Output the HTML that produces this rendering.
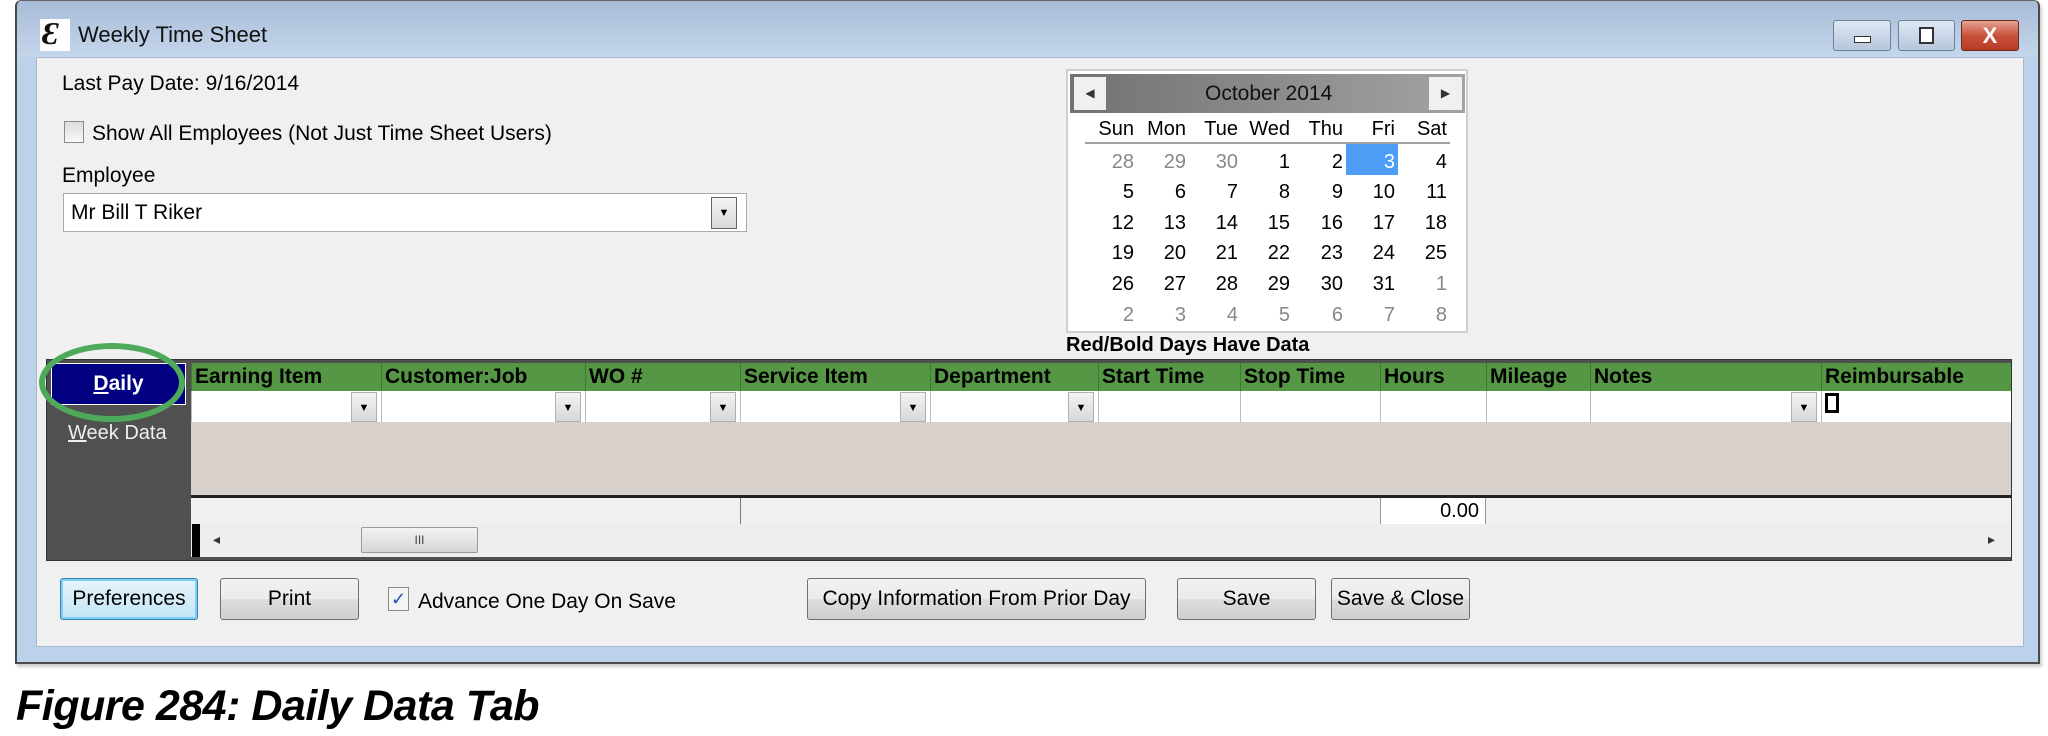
<!DOCTYPE html>
<html><head><meta charset="utf-8"><style>
*{box-sizing:border-box;margin:0;padding:0}
body{width:2048px;height:736px;background:#fff;position:relative;overflow:hidden;font-family:"Liberation Sans",sans-serif;font-size:21px;color:#000}
.a{position:absolute}
.t{position:absolute;white-space:nowrap;line-height:1}
.btn{position:absolute;border:1px solid #707070;border-radius:3px;background:linear-gradient(#f2f2f2,#ebebeb 50%,#dddddd 51%,#cfcfcf);text-align:center;font-size:21px;line-height:40px;white-space:nowrap}
.dd{position:absolute;width:26px;background:linear-gradient(#f4f4f4,#d8d8d8);border:1px solid #b0b0b0;font-size:11px;text-align:center}
.hd{position:absolute;top:363px;height:28px;font-weight:bold;font-size:21px;line-height:28px;padding-left:3px;border-left:1px solid #3f7a30;white-space:nowrap;overflow:hidden}
.cell{position:absolute;top:391px;height:31px;background:#fff;border-left:1px solid #bbb}
.n{position:absolute;width:40px;text-align:right;font-size:20px;line-height:1}
</style></head><body>
<div class="a" style="left:15px;top:0;width:2025px;height:664px;background:#bcd1ea;border:2px solid #4a4a4a;border-top:1px solid #666;border-radius:6px 6px 0 0;box-shadow:2px 3px 3px #ccc"></div>
<div class="a" style="left:17px;top:1px;width:2021px;height:56px;background:linear-gradient(#a8bcd7,#c4d6eb);border-radius:6px 6px 0 0"></div>
<div class="a" style="left:36px;top:57px;width:1988px;height:590px;background:#f0f0f0;border:1px solid #a5b8cf"></div>
<div class="a" style="left:40px;top:19px;width:30px;height:32px;background:#fff"></div>
<div class="t" style="left:42px;top:17px;font-family:'Liberation Serif',serif;font-style:italic;font-weight:bold;font-size:32px;color:#111">Ɛ</div>
<div class="t" style="left:78px;top:24px;font-size:22px;color:#111">Weekly Time Sheet</div>
<div class="a" style="left:1833px;top:20px;width:58px;height:31px;border:1px solid #6d7f99;border-radius:3px;background:linear-gradient(#dfe8f4,#b6c6dc)"><div class="a" style="left:20px;top:15px;width:17px;height:7px;border:1px solid #333;background:#fff"></div></div>
<div class="a" style="left:1898px;top:20px;width:57px;height:31px;border:1px solid #6d7f99;border-radius:3px;background:linear-gradient(#dfe8f4,#b6c6dc)"><div class="a" style="left:20px;top:6px;width:15px;height:17px;border:2px solid #333;background:#fff"></div></div>
<div class="a" style="left:1961px;top:20px;width:58px;height:31px;border:1px solid #6b2a20;border-radius:3px;background:linear-gradient(#e8a293,#c8523d 50%,#b93a24);color:#fff;font-weight:bold;font-size:22px;text-align:center;line-height:29px">X</div>
<div class="t" style="left:62px;top:73px">Last Pay Date: 9/16/2014</div>
<div class="a" style="left:64px;top:121px;width:20px;height:22px;border:1px solid #8a8a8a;background:linear-gradient(#ddd,#f8f8f8)"></div>
<div class="t" style="left:92px;top:123px">Show All Employees (Not Just Time Sheet Users)</div>
<div class="t" style="left:62px;top:165px">Employee</div>
<div class="a" style="left:63px;top:193px;width:684px;height:39px;background:#fff;border:1px solid #aaa"></div>
<div class="t" style="left:71px;top:202px">Mr Bill T Riker</div>
<div class="dd" style="left:711px;top:197px;height:32px;line-height:30px;border-color:#666">▼</div>
<div class="a" style="left:1066px;top:69px;width:402px;height:264px;background:#fff;border:2px solid #cfcfcf"></div>
<div class="a" style="left:1070px;top:74px;width:395px;height:39px;background:linear-gradient(90deg,#727272,#a3a3a3)"></div>
<div class="a" style="left:1074px;top:77px;width:32px;height:33px;background:#f0f0f0;font-size:12px;text-align:center;line-height:33px;color:#333">◀</div>
<div class="a" style="left:1429px;top:77px;width:33px;height:33px;background:#f0f0f0;font-size:12px;text-align:center;line-height:33px;color:#333">▶</div>
<div class="t" style="left:1205px;top:83px;font-size:21px;color:#111">October 2014</div>
<div class="a" style="left:1085px;top:142px;width:365px;height:2px;background:#a0a0a0"></div>
<div class="a" style="left:1346px;top:144px;width:52px;height:31px;background:#4d9cf5"></div>
<div id="cal"></div>
<div class="t" style="left:1066px;top:335px;font-weight:bold;font-size:20px">Red/Bold Days Have Data</div>
<div class="a" style="left:46px;top:359px;width:1966px;height:202px;background:#505050;border:1px solid #333"></div>
<div class="a" style="left:191px;top:363px;width:1820px;height:28px;background:#559744"></div>
<div class="a" style="left:191px;top:391px;width:1820px;height:31px;background:#fff"></div>
<div class="a" style="left:191px;top:422px;width:1820px;height:73px;background:#d8d0ca"></div>
<div class="a" style="left:191px;top:495px;width:1820px;height:3px;background:#222"></div>
<div class="a" style="left:191px;top:498px;width:1820px;height:26px;background:#f0f0f0"></div>
<div class="a" style="left:740px;top:498px;width:1px;height:26px;background:#777"></div>
<div class="a" style="left:1380px;top:498px;width:106px;height:26px;background:#fff;border-left:1px solid #999;border-right:1px solid #999;text-align:right;padding-right:6px;font-size:20px;line-height:26px">0.00</div>
<div class="a" style="left:191px;top:524px;width:1820px;height:33px;background:#eeeeee"></div>
<div class="a" style="left:192px;top:524px;width:8px;height:33px;background:#000"></div>
<div class="t" style="left:213px;top:532px;font-size:14px;color:#333">◂</div>
<div class="a" style="left:361px;top:527px;width:117px;height:26px;border:1px solid #999;border-radius:2px;background:linear-gradient(#f3f3f3,#d6d6d6);text-align:center;font-size:12px;line-height:24px;color:#444">III</div>
<div class="t" style="left:1988px;top:532px;font-size:14px;color:#333">▸</div>
<div id="cols"></div>
<div class="a" style="left:51px;top:363px;width:135px;height:42px;background:#000080;border:1px solid #fff;color:#fff;font-weight:bold;font-size:21px;text-align:center;line-height:40px"><u>D</u>aily</div>
<div class="t" style="left:68px;top:423px;color:#eee;font-size:20px"><u>W</u>eek Data</div>
<div class="a" style="left:39px;top:343px;width:146px;height:79px;border:6px solid #4fa95a;border-radius:50%"></div>
<div class="btn" style="left:60px;top:578px;width:138px;height:42px;border-color:#3c7fb1;background:linear-gradient(#e5f4fc,#c4e5f6);box-shadow:inset 0 0 0 2px #7fd0f5">Preferences</div>
<div class="btn" style="left:220px;top:578px;width:139px;height:42px">Print</div>
<div class="a" style="left:388px;top:587px;width:21px;height:24px;border:1px solid #8a8a8a;background:#f4f4f4;color:#2a4fb0;font-size:18px;text-align:center;line-height:22px">✓</div>
<div class="t" style="left:418px;top:591px">Advance One Day On Save</div>
<div class="btn" style="left:807px;top:578px;width:339px;height:42px">Copy Information From Prior Day</div>
<div class="btn" style="left:1177px;top:578px;width:139px;height:42px">Save</div>
<div class="btn" style="left:1331px;top:578px;width:139px;height:42px">Save &amp; Close</div>
<div class="t" style="left:16px;top:685px;font-weight:bold;font-style:italic;font-size:43px;letter-spacing:-0.5px">Figure 284: Daily Data Tab</div>
<script>
var R=[1134,1186,1238,1290,1343,1395,1447];
var names=["Sun","Mon","Tue","Wed","Thu","Fri","Sat"],h="";
names.forEach(function(n,i){h+='<div class="n" style="left:'+(R[i]-60)+'px;width:60px;top:119px">'+n+'</div>';});
var rows=[[28,29,30,1,2,3,4],[5,6,7,8,9,10,11],[12,13,14,15,16,17,18],[19,20,21,22,23,24,25],[26,27,28,29,30,31,1],[2,3,4,5,6,7,8]];
var ys=[152,182,213,243,274,305];
rows.forEach(function(r,ri){r.forEach(function(d,i){var g=(ri==0&&i<3)||(ri==4&&i==6)||ri==5;var c=g?'#888':(ri==0&&i==5?'#fff':'#000');h+='<div class="n" style="left:'+(R[i]-40)+'px;top:'+ys[ri]+'px;color:'+c+'">'+d+'</div>';});});
document.getElementById('cal').innerHTML=h;
var C=[[191,"Earning Item",1],[381,"Customer:Job",1],[585,"WO #",1],[740,"Service Item",1],[930,"Department",1],[1098,"Start Time",0],[1240,"Stop Time",0],[1380,"Hours",0],[1486,"Mileage",0],[1590,"Notes",1],[1821,"Reimbursable",0]],x="";
C.forEach(function(c,i){var e=i<C.length-1?C[i+1][0]:2011;x+='<div class="hd" style="left:'+c[0]+'px;width:'+(e-c[0])+'px">'+c[1]+'</div>';x+='<div class="cell" style="left:'+c[0]+'px;width:'+(e-c[0])+'px"></div>';if(c[2])x+='<div class="dd" style="left:'+(e-30)+'px;top:392px;height:30px;line-height:30px">▼</div>';});
x+='<div class="a" style="left:1825px;top:393px;width:14px;height:20px;border:3px solid #000;background:#fff"></div>';
document.getElementById('cols').innerHTML=x;
</script>
</body></html>
